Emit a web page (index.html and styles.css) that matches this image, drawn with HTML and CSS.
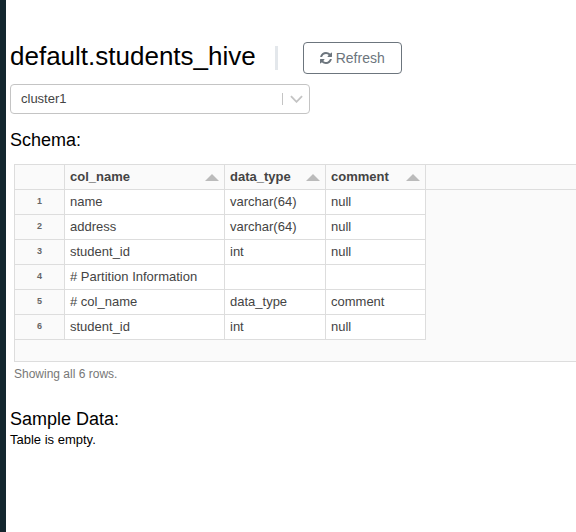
FILE: index.html
```html
<!DOCTYPE html>
<html lang="en">
<head>
    <meta charset="UTF-8">
    <meta name="viewport" content="width=device-width, initial-scale=1.0">
    <title>default.students_hive</title>
    <link rel="stylesheet" href="styles.css">
</head>
<body>
    <div class="sidebar"></div>
    <main class="content">
        <div class="title-row">
            <h1>default.students_hive</h1>
            <span class="divider"></span>
            <button type="button" class="refresh">
                <svg class="refresh-icon" viewBox="0 0 1536 1536"><path d="M1511 928q0 5-1 7-64 268-268 434.5T764 1536q-146 0-282.5-55T238 1324l-129 129q-19 19-45 19t-45-19-19-45V960q0-26 19-45t45-19h448q26 0 45 19t19 45-19 45l-137 137q71 66 161 102t187 36q134 0 250-65t186-179q11-17 53-117 8-23 30-23h192q13 0 22.5 9.5t9.5 22.5zm25-800v448q0 26-19 45t-45 19h-448q-26 0-45-19t-19-45 19-45l138-138Q969 256 768 256q-134 0-250 65T332 500q-11 17-53 117-8 23-30 23H50q-13 0-22.5-9.5T18 608v-7q65-268 270-434.5T768 0q146 0 284 55.5T1297 212l130-129q19-19 45-19t45 19 19 45z"/></svg>
                Refresh
            </button>
        </div>
        <div class="select">
            <span class="select-value">cluster1</span>
            <span class="select-sep"></span>
            <svg class="select-arrow" viewBox="0 0 14 8"><path d="M1 1l6 6 6-6"/></svg>
        </div>
        <h2>Schema:</h2>
        <div class="grid">
            <table>
                <thead>
                    <tr>
                        <th class="index"></th>
                        <th class="col-name">col_name<span class="sort"></span></th>
                        <th class="col-type">data_type<span class="sort"></span></th>
                        <th class="col-comment">comment<span class="sort"></span></th>
                        <th class="filler"></th>
                    </tr>
                </thead>
                <tbody>
                    <tr><td class="index">1</td><td>name</td><td>varchar(64)</td><td>null</td><td class="filler"></td></tr>
                    <tr><td class="index">2</td><td>address</td><td>varchar(64)</td><td>null</td><td class="filler"></td></tr>
                    <tr><td class="index">3</td><td>student_id</td><td>int</td><td>null</td><td class="filler"></td></tr>
                    <tr><td class="index">4</td><td># Partition Information</td><td></td><td></td><td class="filler"></td></tr>
                    <tr><td class="index">5</td><td># col_name</td><td>data_type</td><td>comment</td><td class="filler"></td></tr>
                    <tr><td class="index">6</td><td>student_id</td><td>int</td><td>null</td><td class="filler"></td></tr>
                </tbody>
            </table>
        </div>
        <p class="row-count">Showing all 6 rows.</p>
        <h2 class="sample-title">Sample Data:</h2>
        <p class="empty">Table is empty.</p>
    </main>
</body>
</html>
```

FILE: styles.css
```css
html, body {
    height: 100%;
}
body {
    margin: 0;
    display: flex;
    font-family: "Liberation Sans", Arial, sans-serif;
    color: #000;
    background-color: #fff;
}
.sidebar {
    flex: none;
    width: 6px;
    background-color: #14272f;
}
.content {
    flex: 1;
    min-width: 0;
    padding: 42px 0 0 4px;
}
.title-row {
    display: flex;
    align-items: center;
    height: 32px;
}
h1 {
    margin: -5px 0 0;
    font-size: 26px;
    font-weight: normal;
    line-height: 30px;
}
.divider {
    width: 3px;
    height: 24px;
    margin: 0 25px 0 19px;
    background-color: #e3e7eb;
}
.refresh {
    display: flex;
    align-items: center;
    justify-content: center;
    gap: 4px;
    width: 99px;
    height: 32px;
    padding: 0;
    font-family: inherit;
    font-size: 14px;
    color: #6c757d;
    background-color: #fff;
    border: 1px solid #6c757d;
    border-radius: 4px;
}
.refresh-icon {
    width: 12px;
    height: 12px;
    fill: #6c757d;
}
.select {
    display: flex;
    align-items: center;
    box-sizing: border-box;
    width: 300px;
    height: 30px;
    margin-top: 10px;
    padding: 0 6px 2px 10px;
    font-size: 13px;
    color: #444;
    border: 1px solid #c4c4c4;
    border-radius: 4px;
}
.select-value {
    flex: 1;
}
.select-sep {
    width: 1px;
    height: 12px;
    margin: 2px 7px 0 0;
    background-color: #c4c4c4;
}
.select-arrow {
    width: 13px;
    height: 8px;
    margin-top: 2px;
    fill: none;
    stroke: #c4c4c4;
    stroke-width: 2;
}
h2 {
    margin: 16px 0 0;
    font-size: 18px;
    font-weight: normal;
    line-height: 20px;
}
.grid {
    box-sizing: border-box;
    height: 198px;
    margin: 14px 0 0 4px;
    background-color: #fafafa;
    border: 1px solid #ddd;
    border-right: none;
}
table {
    width: 100%;
    table-layout: fixed;
    border-collapse: separate;
    border-spacing: 0;
    font-size: 13px;
    color: #444;
}
th, td {
    box-sizing: border-box;
    height: 25px;
    padding: 0 5px 2px;
    text-align: left;
    background-color: #fff;
    border-right: 1px solid #ddd;
    border-bottom: 1px solid #ddd;
}
th {
    position: relative;
    background-color: #fafafa;
}
.index {
    width: 50px;
    padding: 0 0 2px;
    font-size: 9px;
    font-weight: bold;
    text-align: center;
    color: #666;
    background-color: #fafafa;
}
.col-name {
    width: 160px;
}
.col-type {
    width: 101px;
}
.col-comment {
    width: 100px;
}
.sort {
    position: absolute;
    right: 5px;
    top: 9px;
    border-left: 7px solid transparent;
    border-right: 7px solid transparent;
    border-bottom: 7px solid #bbb;
}
.filler {
    width: auto;
    border-right: none;
    background-color: #fafafa;
}
td.filler {
    border-bottom: none;
}
.row-count {
    margin: 5px 0 0 4px;
    font-size: 12px;
    line-height: 14px;
    color: #777;
}
.sample-title {
    margin-top: 28px;
}
.empty {
    margin: 3px 0 0;
    font-size: 13px;
    line-height: 16px;
}
```
